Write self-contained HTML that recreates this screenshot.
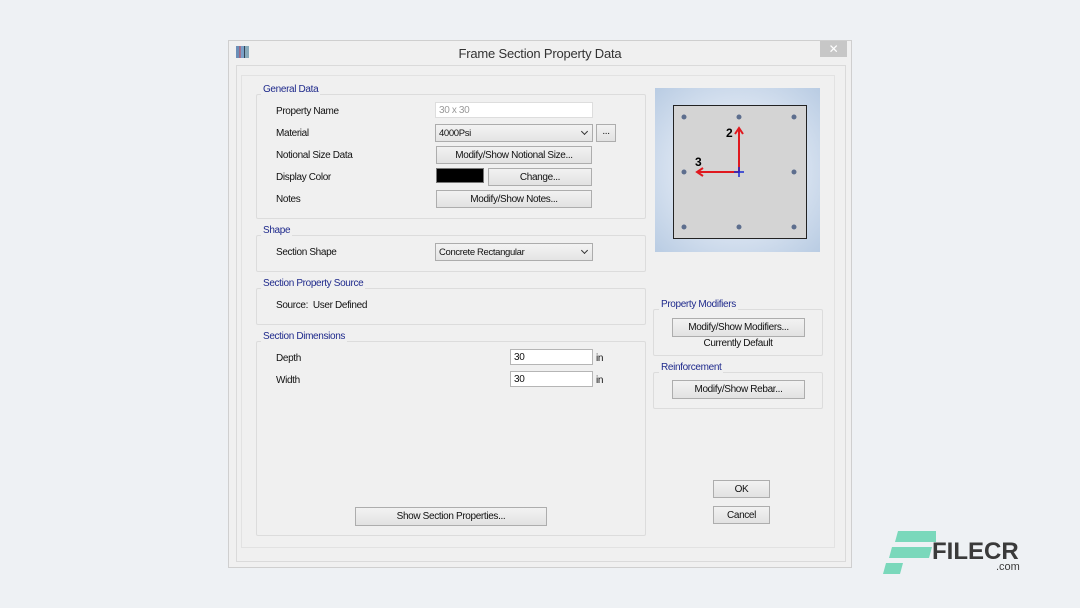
<!DOCTYPE html>
<html><head><style>
*{margin:0;padding:0;box-sizing:border-box}
body{width:1080px;height:608px;background:#eef1f4;font-family:"Liberation Sans",sans-serif;font-size:10px;letter-spacing:-0.35px;color:#111;position:relative;overflow:hidden}
.a{position:absolute}
.grp{position:absolute;border:1px solid #dcdcdc;border-radius:2px}
.gl{position:absolute;color:#1f2a8c;background:#f0f0f0;padding:0 2px;font-size:10px;line-height:12px}
.btn{position:absolute;border:1px solid #adadad;background:linear-gradient(#f2f2f2,#e2e2e2);text-align:center;line-height:17px;font-size:10px}
.inp{position:absolute;border:1px solid #b5b5b5;background:#fff;padding-left:3px;line-height:15px;font-size:10px}
.lbl{position:absolute;line-height:12px;margin-top:2px}
.sel{position:absolute;border:1px solid #acacac;background:linear-gradient(#f3f3f3,#e4e4e4);padding-left:3px;line-height:17px;font-size:9.5px}
.sel:after{content:"";position:absolute;right:5px;top:4px;width:4px;height:4px;border-right:1.3px solid #333;border-bottom:1.3px solid #333;transform:rotate(45deg)}
</style></head><body>
<div class="a" style="left:228px;top:40px;width:624px;height:528px;background:#f0f0f0;border:1px solid #cfcfcf"></div>
<div class="a" style="left:229px;top:41px;width:622px;height:24px;background:#f0f0f0"></div>
<div class="a" style="left:236px;top:46px;width:13px;height:12px;background:linear-gradient(90deg,#6b8fb8 0 25%,#c45 25% 35%,#7aa0c8 35% 60%,#345 60% 70%,#8ab 70%)"></div>
<div class="a" style="left:228px;top:46px;width:624px;text-align:center;font-size:13px;letter-spacing:-0.2px;color:#333">Frame Section Property Data</div>
<div class="a" style="left:820px;top:41px;width:27px;height:16px;background:#c7c7c7;color:#fff;text-align:center;font-size:12px;line-height:16px">✕</div>
<div class="a" style="left:236px;top:65px;width:610px;height:497px;border:1px solid #dadada"></div>
<div class="a" style="left:241px;top:75px;width:594px;height:473px;border:1px solid #e2e2e2"></div>

<div class="grp" style="left:256px;top:94px;width:390px;height:125px"></div>
<div class="gl" style="left:261px;top:84px">General Data</div>
<div class="lbl" style="left:276px;top:104px">Property Name</div>
<div class="inp" style="left:435px;top:102px;width:158px;height:16px;color:#999;border-color:#ddd">30 x 30</div>
<div class="lbl" style="left:276px;top:126px">Material</div>
<div class="sel" style="left:435px;top:124px;width:158px;height:18px">4000Psi</div>
<div class="btn" style="left:596px;top:124px;width:20px;height:18px;line-height:14px">...</div>
<div class="lbl" style="left:276px;top:148px">Notional Size Data</div>
<div class="btn" style="left:436px;top:146px;width:156px;height:18px">Modify/Show Notional Size...</div>
<div class="lbl" style="left:276px;top:170px">Display Color</div>
<div class="a" style="left:436px;top:168px;width:48px;height:15px;background:#000;border:1px solid #777"></div>
<div class="btn" style="left:488px;top:168px;width:104px;height:18px">Change...</div>
<div class="lbl" style="left:276px;top:192px">Notes</div>
<div class="btn" style="left:436px;top:190px;width:156px;height:18px">Modify/Show Notes...</div>

<div class="grp" style="left:256px;top:235px;width:390px;height:37px"></div>
<div class="gl" style="left:261px;top:225px">Shape</div>
<div class="lbl" style="left:276px;top:245px">Section Shape</div>
<div class="sel" style="left:435px;top:243px;width:158px;height:18px">Concrete Rectangular</div>

<div class="grp" style="left:256px;top:288px;width:390px;height:37px"></div>
<div class="gl" style="left:261px;top:278px">Section Property Source</div>
<div class="lbl" style="left:276px;top:298px">Source:&nbsp; User Defined</div>

<div class="grp" style="left:256px;top:341px;width:390px;height:195px"></div>
<div class="gl" style="left:261px;top:331px">Section Dimensions</div>
<div class="lbl" style="left:276px;top:351px">Depth</div>
<div class="inp" style="left:510px;top:349px;width:83px;height:16px">30</div>
<div class="lbl" style="left:596px;top:351px">in</div>
<div class="lbl" style="left:276px;top:373px">Width</div>
<div class="inp" style="left:510px;top:371px;width:83px;height:16px">30</div>
<div class="lbl" style="left:596px;top:373px">in</div>
<div class="btn" style="left:355px;top:507px;width:192px;height:19px">Show Section Properties...</div>

<div class="a" style="left:655px;top:88px;width:165px;height:164px;background:radial-gradient(ellipse at center,#e8eef7 30%,#b9cce3 100%)"></div>
<div class="a" style="left:673px;top:105px;width:134px;height:134px;background:#d4d4d4;border:1px solid #222"></div>
<svg class="a" style="left:673px;top:105px" width="134" height="134">
<g fill="#5d6e8e"><circle cx="11" cy="12" r="2.5"/><circle cx="66" cy="12" r="2.5"/><circle cx="121" cy="12" r="2.5"/><circle cx="11" cy="67" r="2.5"/><circle cx="121" cy="67" r="2.5"/><circle cx="11" cy="122" r="2.5"/><circle cx="66" cy="122" r="2.5"/><circle cx="121" cy="122" r="2.5"/></g>
<g stroke="#e0191f" stroke-width="2" fill="none"><path d="M66 67V23M62 29l4-6 4 6M66 67H24M30 63l-6 4 6 4"/></g>
<path d="M61 67h10M66 62v10" stroke="#1a2ad0" stroke-width="1.5"/>
<text x="53" y="32" font-family="Liberation Sans" font-weight="bold" font-size="12">2</text>
<text x="22" y="61" font-family="Liberation Sans" font-weight="bold" font-size="12">3</text>
</svg>

<div class="grp" style="left:653px;top:309px;width:170px;height:47px"></div>
<div class="gl" style="left:659px;top:299px">Property Modifiers</div>
<div class="btn" style="left:672px;top:318px;width:133px;height:19px">Modify/Show Modifiers...</div>
<div class="lbl" style="left:653px;top:336px;width:170px;text-align:center">Currently Default</div>
<div class="grp" style="left:653px;top:372px;width:170px;height:37px"></div>
<div class="gl" style="left:659px;top:362px">Reinforcement</div>
<div class="btn" style="left:672px;top:380px;width:133px;height:19px">Modify/Show Rebar...</div>
<div class="btn" style="left:713px;top:480px;width:57px;height:18px">OK</div>
<div class="btn" style="left:713px;top:506px;width:57px;height:18px">Cancel</div>

<svg class="a" style="left:882px;top:530px" width="54" height="46"><g fill="#7ad8bb"><path d="M16 1h49l-3 11H13z"/><path d="M10 17h40l-3 11H7z"/><path d="M4 33h17l-3 11H1z"/></g></svg>
<div class="a" style="left:932px;top:539px;font-size:24px;letter-spacing:0;font-weight:bold;color:#3a3a3a;line-height:26px">FILECR</div>
<div class="a" style="left:996px;top:561px;font-size:11px;letter-spacing:0;color:#3a3a3a">.com</div>
</body></html>
